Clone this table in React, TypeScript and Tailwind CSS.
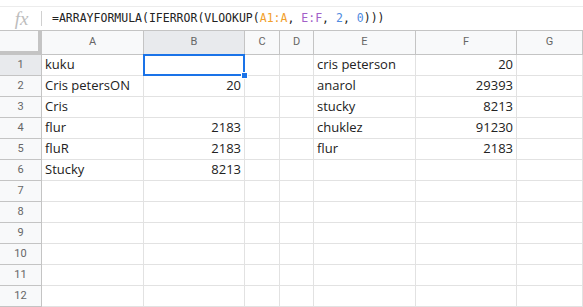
import React from "react";

type Row = { a?: string; b?: string; e?: string; f?: string };

const rows: Row[] = [
  { a: "kuku", e: "cris peterson", f: "20" },
  { a: "Cris petersON", b: "20", e: "anarol", f: "29393" },
  { a: "Cris", e: "stucky", f: "8213" },
  { a: "flur", b: "2183", e: "chuklez", f: "91230" },
  { a: "fluR", b: "2183", e: "flur", f: "2183" },
  { a: "Stucky", b: "8213" },
  {}, {}, {}, {}, {}, {},
];

const cols = ["A", "B", "C", "D", "E", "F", "G"];
const widths = ["w-[102px]", "w-[101px]", "w-[35px]", "w-[34px]", "w-[102px]", "w-[101px]", "flex-1"];

const cellFont = { fontFamily: '"Open Sans", "Noto Sans", Arial, sans-serif' };
const headFont = { fontFamily: 'Roboto, "Liberation Sans", Arial, sans-serif' };

function FormulaBar() {
  return (
    <div className="flex h-[31px] items-stretch border-b border-[#c4c4c4] pt-[6px]">
      <div className="flex flex-1 items-center border-t border-[#ececec]">
        <div className="flex w-[41px] items-center justify-center">
          <span
            className="text-[19px] italic leading-none text-[#bdbdbd] pl-[2px]"
            style={{ fontFamily: '"Liberation Serif", "DejaVu Serif", serif' }}
          >
            fx
          </span>
        </div>
        <div className="h-[15px] w-px bg-[#d0d0d0]" />
        <div
          className="pl-[10px] text-[11.5px] text-[#222] whitespace-pre"
          style={{ fontFamily: '"DejaVu Sans Mono", "Liberation Mono", monospace' }}
        >
          =ARRAYFORMULA(IFERROR(VLOOKUP(
          <span className="text-[#f2a02c]">A1:A</span>,{" "}
          <span className="text-[#a25fc8]">E:F</span>,{" "}
          <span className="text-[#4f8ae0]">2</span>,{" "}
          <span className="text-[#4f8ae0]">0</span>)))
        </div>
      </div>
    </div>
  );
}

function HeaderRow() {
  return (
    <div className="flex h-[24px]" style={headFont}>
      <div className="relative w-[42px] shrink-0 bg-[#f8f9fa] border-r border-[#c4c4c4]">
        <div className="absolute right-[-1px] top-0 h-[24px] w-[4px] bg-[#c4c4c4]" />
        <div className="absolute bottom-0 left-0 h-[4px] w-[42px] bg-[#c4c4c4]" />
      </div>
      {cols.map((c, i) => (
        <div
          key={c}
          className={`${widths[i]} shrink-0 flex items-center justify-center border-r border-b border-[#c4c4c4] text-[11px] text-[#666] ${
            c === "B" ? "bg-[#e8eaed]" : "bg-[#f8f9fa]"
          }`}
        >
          {c}
        </div>
      ))}
    </div>
  );
}

function Cell({ w, text, right, selected }: { w: string; text?: string; right?: boolean; selected?: boolean }) {
  return (
    <div
      className={`${w} shrink-0 relative flex items-center border-r border-b border-[#e2e2e2] px-[3px] text-[13px] text-[#222] ${
        right ? "justify-end" : "justify-start"
      } ${selected ? "z-10" : ""}`}
      style={cellFont}
    >
      {text}
      {selected && (
        <>
          <div className="absolute left-[-1px] top-[-1px] right-[-1px] bottom-[-1px] border-2 border-[#1a73e8]" />
          <div className="absolute right-[-4px] bottom-[-4px] h-[7px] w-[7px] bg-[#1a73e8] border border-white" />
        </>
      )}
    </div>
  );
}

export default function App() {
  return (
    <div className="h-[307px] w-[583px] overflow-hidden bg-white">
      <FormulaBar />
      <HeaderRow />
      {rows.map((r, i) => (
        <div key={i} className={`flex h-[21px] relative ${i === 0 ? "z-10" : ""}`}>
          <div
            className={`w-[42px] shrink-0 flex items-center justify-center border-r border-b border-[#c4c4c4] text-[11px] text-[#666] ${
              i === 0 ? "bg-[#e8eaed]" : "bg-[#f8f9fa]"
            }`}
            style={headFont}
          >
            {i + 1}
          </div>
          <Cell w={widths[0]} text={r.a} />
          <Cell w={widths[1]} text={r.b} right selected={i === 0} />
          <Cell w={widths[2]} />
          <Cell w={widths[3]} />
          <Cell w={widths[4]} text={r.e} />
          <Cell w={widths[5]} text={r.f} right />
          <Cell w={widths[6]} />
        </div>
      ))}
    </div>
  );
}
